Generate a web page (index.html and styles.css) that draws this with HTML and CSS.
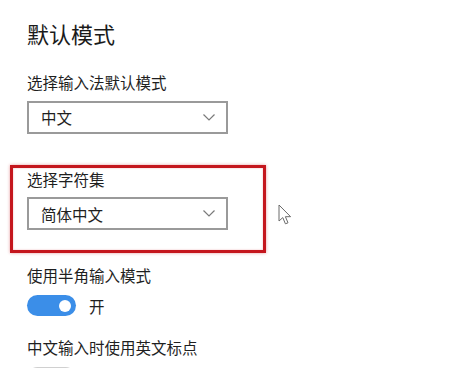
FILE: index.html
```html
<!DOCTYPE html>
<html lang="zh-CN">
<head>
<meta charset="utf-8">
<title>默认模式</title>
<link rel="stylesheet" href="styles.css">
</head>
<body>
<main class="page">
  <h1 class="title">默认模式</h1>

  <section class="setting setting-select">
    <div class="label">选择输入法默认模式</div>
    <div class="select">
      <span class="select-value">中文</span>
      <svg class="chevron" width="12" height="7" viewBox="0 0 12 7"><polyline points="0.5,0.5 6,6 11.5,0.5" fill="none" stroke="#7a7a7a" stroke-width="1.2"/></svg>
    </div>
  </section>

  <section class="setting setting-select">
    <div class="label">选择字符集</div>
    <div class="select">
      <span class="select-value">简体中文</span>
      <svg class="chevron" width="12" height="7" viewBox="0 0 12 7"><polyline points="0.5,0.5 6,6 11.5,0.5" fill="none" stroke="#7a7a7a" stroke-width="1.2"/></svg>
    </div>
  </section>

  <section class="setting setting-toggle">
    <div class="label">使用半角输入模式</div>
    <div class="toggle-row">
      <span class="toggle on"><span class="knob"></span></span>
      <span class="toggle-text">开</span>
    </div>
  </section>

  <section class="setting setting-toggle">
    <div class="label">中文输入时使用英文标点</div>
    <div class="toggle-row">
      <span class="toggle off"><span class="knob"></span></span>
    </div>
  </section>

  <div class="highlight"></div>
  <svg class="cursor" width="15" height="22" viewBox="0 0 15 22">
    <path d="M1 1 L1 17 L4.8 13.6 L7.4 19.8 L10 18.8 L7.4 12.7 L12.6 12.7 Z" fill="#fff" stroke="#6a6a6a" stroke-width="1" stroke-linejoin="round"/>
  </svg>
</main>
</body>
</html>
```

FILE: styles.css
```css
html, body {
  margin: 0;
  padding: 0;
  background: #ffffff;
}

body {
  font-family: "Noto Sans CJK SC", "Noto Sans", sans-serif;
  color: #1f1f1f;
  width: 474px;
  height: 368px;
  overflow: hidden;
}

.page {
  position: relative;
  padding: 18px 0 0 27px;
  height: 368px;
  box-sizing: border-box;
  overflow: hidden;
}

.title {
  margin: 0 0 24px 0;
  font-size: 22px;
  line-height: 30px;
  font-weight: 400;
  color: #1a1a1a;
}

.label {
  font-size: 15.5px;
  line-height: 20px;
}

.setting-select {
  margin-bottom: 35px;
}

.setting-select .label {
  margin-bottom: 8.5px;
}

.select {
  width: 201px;
  height: 33px;
  box-sizing: border-box;
  border: 2px solid #9a9a9a;
  display: flex;
  align-items: center;
  justify-content: space-between;
  padding: 0 11px 0 12px;
  font-size: 15.5px;
}

.chevron {
  display: block;
}

.setting-toggle {
  margin-bottom: 21px;
}

.setting-toggle .label {
  margin-bottom: 10px;
}

.toggle-row {
  display: flex;
  align-items: center;
  gap: 13px;
}

.toggle {
  width: 49px;
  height: 21px;
  border-radius: 11px;
  box-sizing: border-box;
  display: flex;
  align-items: center;
}

.toggle.on {
  background: #3b8ee8;
  justify-content: flex-end;
  padding-right: 5px;
}

.toggle.off {
  border: 2px solid #d0d0d0;
  padding-left: 4px;
}

.knob {
  width: 12px;
  height: 12px;
  border-radius: 50%;
  background: #ffffff;
}

.toggle.off .knob {
  background: #d0d0d0;
}

.toggle-text {
  font-size: 15.5px;
  line-height: 20px;
}

.highlight {
  position: absolute;
  left: 10px;
  top: 165px;
  width: 256px;
  height: 88px;
  box-sizing: border-box;
  border: 3px solid #c4161d;
  box-shadow: 0 0 3px rgba(200, 30, 40, 0.45), inset 0 0 2px rgba(200, 30, 40, 0.35);
}

.cursor {
  position: absolute;
  left: 278px;
  top: 204px;
}
```
